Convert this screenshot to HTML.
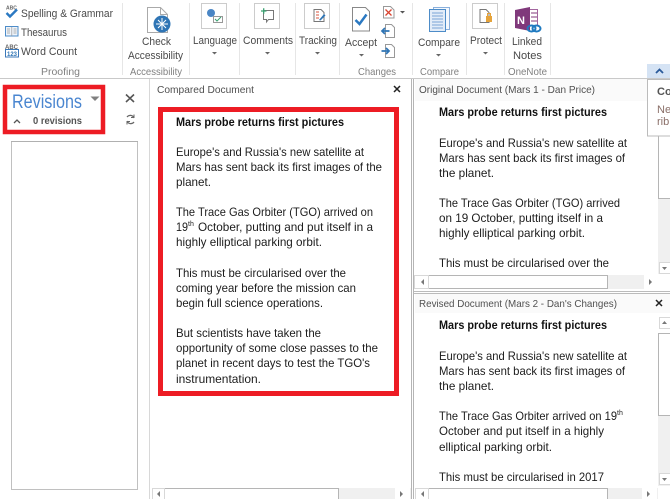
<!DOCTYPE html>
<html><head><meta charset="utf-8"><style>
html,body{margin:0;padding:0;background:#fff}
svg{display:block}
text{font-family:"Liberation Sans",sans-serif;fill:#111}
.r{font-size:11px;fill:#4a4a4a}
.g{font-size:10.5px;fill:#808080}
.b{font-size:12px;fill:#1c1c1c}
.h{font-size:10.5px;fill:#505050}
.bb{font-size:12px;font-weight:bold;fill:#111}
</style></head><body>
<svg width="670" height="499" viewBox="0 0 670 499" xmlns="http://www.w3.org/2000/svg">
<rect width="670" height="499" fill="#fff"/>
<!-- ribbon -->
<g stroke="#e6e6e6" fill="none">
<path d="M122.500 3V75M189.500 3V75M239.500 3V75M295.500 3V75M339.500 3V75M412.500 3V75M466.500 3V75M504.500 3V75M550.500 3V75"/>
</g>
<rect x="0" y="78" width="670" height="1" fill="#c9c9c9"/>
<rect x="647" y="64" width="23" height="14" fill="#d5e3f4"/>
<path d="M656 73l3.500-3.500 3.500 3.500" stroke="#2a5a9a" stroke-width="1.800" fill="none"/>
<!-- proofing -->
<text x="6" y="9.500" style="font-size:5px;font-weight:bold;fill:#666">ABC</text>
<path d="M6.500 13l3.500 3.500 7-7" stroke="#2b79c2" stroke-width="2.400" fill="none"/>
<text class="r" x="21" y="17" textLength="92" lengthAdjust="spacingAndGlyphs">Spelling &amp; Grammar</text>
<rect x="5.500" y="26.500" width="12.500" height="9.500" fill="#eef4fb" stroke="#4d8cc8"/><path d="M11.800 27v9M7 29h3M7 31h3M7 33h3M13.500 29h3M13.500 31h3M13.500 33h3" stroke="#999" stroke-width=".7"/>
<text class="r" x="21" y="36" textLength="46" lengthAdjust="spacingAndGlyphs">Thesaurus</text>
<text x="5" y="49" style="font-size:6px;font-weight:bold;fill:#666">ABC</text>
<rect x="5.500" y="49.500" width="13" height="7.500" fill="#fff" stroke="#3c78b8"/>
<text x="7" y="56" style="font-size:6px;font-weight:bold;fill:#2f75b5" textLength="10" lengthAdjust="spacingAndGlyphs">123</text>
<text class="r" x="21" y="55" textLength="56" lengthAdjust="spacingAndGlyphs">Word Count</text>
<text class="g" x="41" y="75" textLength="39" lengthAdjust="spacingAndGlyphs">Proofing</text>
<!-- accessibility -->
<path d="M147.500 7.500h13l7 7v18h-20z" fill="#fff" stroke="#aaa"/><path d="M160.500 7.500v7h7" fill="none" stroke="#aaa"/>
<circle cx="162" cy="24" r="8.500" fill="#2f75b5"/><path d="M162 18v12M156 24h12M158 20l8 8M166 20l-8 8" stroke="#fff" stroke-width="1"/>
<text class="r" x="142" y="45" textLength="29" lengthAdjust="spacingAndGlyphs">Check</text>
<text class="r" x="128" y="59" textLength="55" lengthAdjust="spacingAndGlyphs">Accessibility</text>
<text class="g" x="130" y="75" textLength="52" lengthAdjust="spacingAndGlyphs">Accessibility</text>
<!-- language -->
<rect x="201.500" y="3.500" width="25" height="25" fill="#fff" stroke="#ccc"/>
<circle cx="211" cy="13" r="4" fill="#4a86c5"/><path d="M213.500 16.500h9v6h-9z" fill="#fff" stroke="#999"/><path d="M215 19l2 2 4-4" stroke="#3ba272" fill="none"/>
<text class="r" x="193" y="44" textLength="44" lengthAdjust="spacingAndGlyphs">Language</text>
<path d="M212 52h5l-2.500 2.500z" fill="#666"/>
<!-- comments -->
<rect x="254.500" y="3.500" width="25" height="25" fill="#fff" stroke="#ccc"/>
<path d="M263.500 10.500h10v9h-5l-2 2.500v-2.500h-3z" fill="#fff" stroke="#777"/><path d="M261 11h5.500M263.700 8.300v5.400" stroke="#3ba272" stroke-width="1.300"/>
<text class="r" x="243" y="44" textLength="50" lengthAdjust="spacingAndGlyphs">Comments</text>
<path d="M265 52h5l-2.500 2.500z" fill="#666"/>
<!-- tracking -->
<rect x="304.500" y="3.500" width="25" height="25" fill="#fff" stroke="#ccc"/>
<path d="M314 9.500h7l3 3v9h-10z" fill="#fff" stroke="#777"/><path d="M316 12h3M316 15h3M316 18h3" stroke="#d9553f"/><path d="M319 20l5-6 1.500 1.500-5 5z" fill="#2f75b5"/>
<text class="r" x="299" y="44" textLength="38" lengthAdjust="spacingAndGlyphs">Tracking</text>
<path d="M315 52h5l-2.500 2.500z" fill="#666"/>
<!-- changes -->
<path d="M352.500 7.500h13l4 4v19.500h-17z" fill="#fff" stroke="#888"/><path d="M355.500 20l4 4 7-9.500" stroke="#2b79c2" stroke-width="2.500" fill="none"/>
<text class="r" x="345" y="46" textLength="32" lengthAdjust="spacingAndGlyphs">Accept</text>
<path d="M359 54h5l-2.500 2.500z" fill="#666"/>
<path d="M383.500 6.500h7l3.500 3.500v8h-10.500z" fill="#fff" stroke="#999"/><path d="M385.500 9.500l6 6M391.500 9.500l-6 6" stroke="#d9432f" stroke-width="1.300"/>
<path d="M400 11h5l-2.500 2.500z" fill="#555"/>
<path d="M385.500 24.500h6l3 3v10h-9z" fill="#fff" stroke="#999"/><path d="M382 31h7.500M385 28l-3 3 3 3" stroke="#2f75b5" stroke-width="1.800" fill="none"/>
<path d="M385.500 44.500h6l3 3v10h-9z" fill="#fff" stroke="#999"/><path d="M381.500 51h7.500M386 48l3 3-3 3" stroke="#2f75b5" stroke-width="1.800" fill="none"/>
<text class="g" x="358" y="75" textLength="38" lengthAdjust="spacingAndGlyphs">Changes</text>
<!-- compare -->
<rect x="433.500" y="7.500" width="16" height="22" fill="#f4f8fd" stroke="#8ab0dc"/>
<rect x="429.500" y="9.500" width="16" height="22" fill="#e2ecf8" stroke="#4d8cc8"/>
<path d="M432 13h11M432 16h11M432 19h11M432 22h11M432 25h11M432 28h11" stroke="#7aa5d6"/>
<text class="r" x="418" y="46" textLength="42" lengthAdjust="spacingAndGlyphs">Compare</text>
<path d="M436 54h5l-2.500 2.500z" fill="#666"/>
<text class="g" x="420" y="75" textLength="39" lengthAdjust="spacingAndGlyphs">Compare</text>
<!-- protect -->
<rect x="472.500" y="3.500" width="25" height="25" fill="#fff" stroke="#ccc"/>
<path d="M480 9.500h6l3 3v10h-9z" fill="#fff" stroke="#777"/><rect x="486" y="16" width="6" height="6" fill="#e5a33b"/><path d="M487.500 16v-2.500h3v2.500" stroke="#e5a33b" fill="none"/>
<text class="r" x="470" y="44" textLength="32" lengthAdjust="spacingAndGlyphs">Protect</text>
<path d="M483 52h5l-2.500 2.500z" fill="#666"/>
<!-- onenote -->
<path d="M529.500 9.500h8v16h-8z" fill="#fff" stroke="#a3669f"/><path d="M531 13h6M531 17h6M531 21h6" stroke="#80397b"/>
<path d="M515 10l15-3v24l-15-3z" fill="#80397b"/><text x="517" y="24" style="font-size:11px;font-weight:bold;fill:#fff">N</text>
<ellipse cx="531.500" cy="28.500" rx="4" ry="3" fill="none" stroke="#1f7ac0" stroke-width="2"/><ellipse cx="536.500" cy="28.500" rx="4" ry="3" fill="none" stroke="#1f7ac0" stroke-width="2"/>
<text class="r" x="512" y="45" textLength="30" lengthAdjust="spacingAndGlyphs">Linked</text>
<text class="r" x="513" y="59" textLength="29" lengthAdjust="spacingAndGlyphs">Notes</text>
<text class="g" x="508" y="75" textLength="39" lengthAdjust="spacingAndGlyphs">OneNote</text>
<!-- pane dividers -->
<rect x="149" y="79" width="1" height="420" fill="#d8d8d8"/>
<rect x="411" y="79" width="1" height="420" fill="#b5b5b5"/><rect x="413" y="79" width="1" height="420" fill="#b5b5b5"/>
<rect x="414" y="291" width="256" height="1" fill="#bbb"/><rect x="414" y="293" width="256" height="1" fill="#bbb"/>
<!-- revisions -->
<text x="12" y="108" textLength="70" lengthAdjust="spacingAndGlyphs" style="font-size:19px;fill:#4a86d0">Revisions</text>
<path d="M90.500 96.500h9l-4.500 4.500z" fill="#808080"/>
<path d="M14 123l3-3 3 3" fill="none" stroke="#555" stroke-width="1.300"/>
<text x="33" y="124" textLength="49" lengthAdjust="spacingAndGlyphs" style="font-size:10.500px;font-weight:bold;fill:#555">0 revisions</text>
<path d="M126 94.500l8 7.500M134 94.500l-8 7.500" stroke="#555" stroke-width="1.600"/>
<path d="M134 118a4 4 0 0 0-7-1M127 121a4 4 0 0 0 7 1" fill="none" stroke="#666" stroke-width="1.200"/><path d="M134 114.500v3h-3M127 124.500v-3h3" fill="none" stroke="#666"/>
<rect x="11.500" y="141.500" width="126" height="348" fill="#fff" stroke="#c0c0c0"/>
<path d="M11 141.500h127" stroke="#b0b0b0"/>
<!-- headers -->
<rect x="415" y="79" width="232" height="22" fill="#fafafa"/>
<rect x="415" y="294" width="255" height="19" fill="#fafafa"/>
<text class="h" x="157" y="93" textLength="97" lengthAdjust="spacingAndGlyphs">Compared Document</text>
<path d="M394 86l6 6M400 86l-6 6" stroke="#222" stroke-width="1.500"/>
<text class="h" x="419" y="93" textLength="176" lengthAdjust="spacingAndGlyphs">Original Document (Mars 1 - Dan Price)</text>
<text class="h" x="419" y="307" textLength="198" lengthAdjust="spacingAndGlyphs">Revised Document (Mars 2 - Dan's Changes)</text>
<path d="M656 300l6 6M662 300l-6 6" stroke="#222" stroke-width="1.500"/>
<!-- middle doc -->
<text class="bb" x="176" y="126" textLength="168" lengthAdjust="spacingAndGlyphs">Mars probe returns first pictures</text>
<text class="b" x="176" y="156" textLength="188" lengthAdjust="spacingAndGlyphs">Europe's and Russia's new satellite at</text>
<text class="b" x="176" y="171" textLength="206" lengthAdjust="spacingAndGlyphs">Mars has sent back its first images of the</text>
<text class="b" x="176" y="186" textLength="35" lengthAdjust="spacingAndGlyphs">planet.</text>
<text class="b" x="176" y="216" textLength="197" lengthAdjust="spacingAndGlyphs">The Trace Gas Orbiter (TGO) arrived on</text>
<text class="b" x="176" y="231" textLength="12" lengthAdjust="spacingAndGlyphs">19</text>
<text x="188" y="226" style="font-size:7px;fill:#222">th</text>
<text class="b" x="198" y="231" textLength="175" lengthAdjust="spacingAndGlyphs">October, putting and put itself in a</text>
<text class="b" x="176" y="246" textLength="146" lengthAdjust="spacingAndGlyphs">highly elliptical parking orbit.</text>
<text class="b" x="176" y="277" textLength="170" lengthAdjust="spacingAndGlyphs">This must be circularised over the</text>
<text class="b" x="176" y="292" textLength="180" lengthAdjust="spacingAndGlyphs">coming year before the mission can</text>
<text class="b" x="176" y="307" textLength="147" lengthAdjust="spacingAndGlyphs">begin full science operations.</text>
<text class="b" x="176" y="337" textLength="145" lengthAdjust="spacingAndGlyphs">But scientists have taken the</text>
<text class="b" x="176" y="352" textLength="202" lengthAdjust="spacingAndGlyphs">opportunity of some close passes to the</text>
<text class="b" x="176" y="367" textLength="194" lengthAdjust="spacingAndGlyphs">planet in recent days to test the TGO's</text>
<text class="b" x="176" y="383" textLength="85" lengthAdjust="spacingAndGlyphs">instrumentation.</text>
<!-- original doc -->
<text class="bb" x="439" y="116" textLength="168" lengthAdjust="spacingAndGlyphs">Mars probe returns first pictures</text>
<text class="b" x="439" y="147" textLength="188" lengthAdjust="spacingAndGlyphs">Europe's and Russia's new satellite at</text>
<text class="b" x="439" y="162" textLength="186" lengthAdjust="spacingAndGlyphs">Mars has sent back its first images of</text>
<text class="b" x="439" y="177" textLength="55" lengthAdjust="spacingAndGlyphs">the planet.</text>
<text class="b" x="439" y="207" textLength="181" lengthAdjust="spacingAndGlyphs">The Trace Gas Orbiter (TGO) arrived</text>
<text class="b" x="439" y="222" textLength="164" lengthAdjust="spacingAndGlyphs">on 19 October, putting itself in a</text>
<text class="b" x="439" y="237" textLength="146" lengthAdjust="spacingAndGlyphs">highly elliptical parking orbit.</text>
<text class="b" x="439" y="267" textLength="170" lengthAdjust="spacingAndGlyphs">This must be circularised over the</text>
<!-- revised doc -->
<text class="bb" x="439" y="329" textLength="168" lengthAdjust="spacingAndGlyphs">Mars probe returns first pictures</text>
<text class="b" x="439" y="360" textLength="188" lengthAdjust="spacingAndGlyphs">Europe's and Russia's new satellite at</text>
<text class="b" x="439" y="375" textLength="186" lengthAdjust="spacingAndGlyphs">Mars has sent back its first images of</text>
<text class="b" x="439" y="390" textLength="55" lengthAdjust="spacingAndGlyphs">the planet.</text>
<text class="b" x="439" y="420" textLength="178" lengthAdjust="spacingAndGlyphs">The Trace Gas Orbiter arrived on 19</text>
<text x="617" y="415" style="font-size:7px;fill:#222">th</text>
<text class="b" x="439" y="435" textLength="165" lengthAdjust="spacingAndGlyphs">October and put itself in a highly</text>
<text class="b" x="439" y="451" textLength="113" lengthAdjust="spacingAndGlyphs">elliptical parking orbit.</text>
<text class="b" x="439" y="481" textLength="165" lengthAdjust="spacingAndGlyphs">This must be circularised in 2017</text>
<!-- right vertical scrollbars -->
<rect x="658" y="199" width="12" height="75" fill="#f0f0f0"/>
<path d="M658.500 136V198.500H670" fill="none" stroke="#b5b5b5"/>
<rect x="658" y="415" width="12" height="71" fill="#f0f0f0"/>
<rect x="658.500" y="333.500" width="12" height="82" fill="#fff" stroke="#b5b5b5"/>
<rect x="659.500" y="262.500" width="11" height="11" fill="#fff" stroke="#d8d8d8"/><path d="M662 267h5l-2.500 3z" fill="#777"/>
<rect x="659.500" y="317.500" width="11" height="11" fill="#fff" stroke="#d8d8d8"/><path d="M662 324h5l-2.500-3z" fill="#777"/>
<rect x="659.500" y="473.500" width="11" height="11" fill="#fff" stroke="#d8d8d8"/><path d="M662 478h5l-2.500 3z" fill="#777"/>
<!-- horizontal scrollbars -->
<g>
<rect x="607" y="275" width="51" height="14" fill="#f0f0f0"/>
<rect x="428.500" y="275.500" width="179" height="13" fill="#fff" stroke="#b5b5b5"/>
<rect x="414.500" y="275.500" width="14" height="13" fill="#fff" stroke="#d8d8d8"/><path d="M424 279v6l-3-3z" fill="#777"/>
<rect x="644" y="275" width="14" height="14" fill="#fff"/><path d="M649 279v6l3-3z" fill="#777"/>
<rect x="339" y="488" width="72" height="11" fill="#f0f0f0"/>
<rect x="164.500" y="488.500" width="174" height="12" fill="#fff" stroke="#b5b5b5"/>
<rect x="152.500" y="488.500" width="12" height="12" fill="#fff" stroke="#d8d8d8"/><path d="M160 491v6l-3-3z" fill="#777"/>
<rect x="395" y="488" width="15" height="11" fill="#fff"/><path d="M400 491v6l3-3z" fill="#777"/>
<rect x="607" y="488" width="51" height="11" fill="#f0f0f0"/>
<rect x="428.500" y="488.500" width="179" height="12" fill="#fff" stroke="#b5b5b5"/>
<rect x="415.500" y="488.500" width="13" height="12" fill="#fff" stroke="#d8d8d8"/><path d="M424 491v6l-3-3z" fill="#777"/>
<rect x="642" y="488" width="15" height="11" fill="#fff"/><path d="M647 491v6l3-3z" fill="#777"/>
</g>
<!-- tooltip -->
<rect x="647.500" y="79.500" width="30" height="56.500" fill="#fff" stroke="#bbb"/>
<text x="657" y="95" style="font-size:11px;font-weight:bold;fill:#555">Co</text>
<text x="657" y="113" style="font-size:11px;fill:#8a6f68">Ne</text>
<text x="657" y="125" style="font-size:11px;fill:#8a6f68">rib</text>
<!-- red boxes -->
<rect x="5" y="87" width="98" height="45" fill="none" stroke="#ed1c24" stroke-width="4.500"/>
<rect x="160.500" y="109.500" width="236" height="284" fill="none" stroke="#ed1c24" stroke-width="5"/>
</svg>
</body></html>
